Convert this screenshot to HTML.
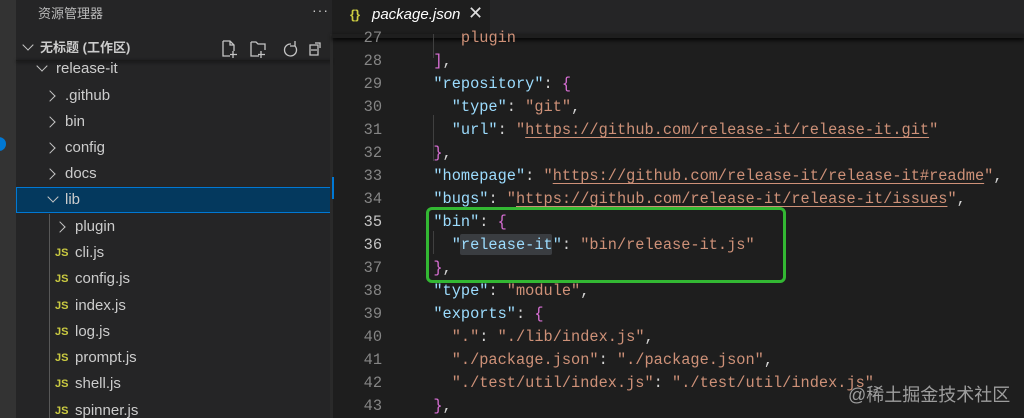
<!DOCTYPE html>
<html><head><meta charset="utf-8"><style>
*{margin:0;padding:0;box-sizing:border-box}
html,body{width:1024px;height:418px;overflow:hidden}
body{background:#1e1e1e;position:relative;font-family:"Liberation Sans","Noto Sans CJK SC",sans-serif}
#act{position:absolute;left:0;top:0;width:16px;height:418px;background:#333}
#side{position:absolute;left:16px;top:0;width:316px;height:418px;background:#252526;color:#ccc}
.row{position:absolute;left:0;width:316px;height:26px;line-height:26px;font-size:15px;color:#ccc}
.chev{position:absolute;width:8px;height:8px;border-right:1.5px solid #c5c5c5;border-bottom:1.5px solid #c5c5c5}
.js{position:absolute;font-size:11px;font-weight:bold;color:#cbcb41;line-height:26px}
#tabs{position:absolute;left:332px;top:0;width:692px;height:34px;background:#252526}
#tab{position:absolute;left:332px;top:0;width:158px;height:34px;background:#1e1e1e}
#ed{position:absolute;left:332px;top:34px;width:692px;height:384px;font-family:"Liberation Mono",monospace;font-size:15.3px}
.cd{position:absolute;left:83px;white-space:pre;color:#d4d4d4}
.k{color:#9cdcfe}.s{color:#ce9178}.p{color:#da70d6}.u{color:#ce9178;text-decoration:underline;text-underline-offset:3px}
</style></head><body>
<div id="act"><div style="position:absolute;left:-8px;top:137px;width:14px;height:14px;border-radius:7px;background:#0078d4"></div></div>
<div id="side">
<div style="position:absolute;left:22px;top:4px;font-size:13px;color:#bbb;line-height:20px">资源管理器</div>
<div style="position:absolute;left:296px;top:2px;font-size:14px;color:#ccc;letter-spacing:1px">···</div>
<div style="position:absolute;left:0;top:60px;width:316px;height:1px;background:#1a1a1a;box-shadow:0 1px 3px #000"></div>
<div class="chev" style="left:8px;top:41px;transform:rotate(45deg)"></div>
<div style="position:absolute;left:24px;top:38px;font-size:13px;font-weight:bold;color:#ccc;line-height:20px">无标题 (工作区)</div>
<svg style="position:absolute;left:205px;top:39px" width="100" height="20" fill="none" stroke="#c5c5c5" stroke-width="1.3">
<path d="M2 2h7l4 4v6M2 2v15h7M9 2v4h4M12 12v7M9 15.5h7"/>
<path d="M30 3h5l2 2h7v6M30 3v14h8M40 12v7M37 15.5h7"/>
<path d="M70 5a6 6 0 1 0 4 2M74 2v5h-5"/>
<path d="M94 4h5v5M91 6h6v10h-8V6zM90 11h6"/>
</svg>
<div class="row" style="top:56px"><div class="chev" style="left:22px;top:6px;transform:rotate(45deg)"></div><span style="position:absolute;left:40px">release-it</span></div>
<div class="row" style="top:83px"><div class="chev" style="left:30px;top:9px;transform:rotate(-45deg)"></div><span style="position:absolute;left:49px">.github</span></div>
<div class="row" style="top:109px"><div class="chev" style="left:30px;top:9px;transform:rotate(-45deg)"></div><span style="position:absolute;left:49px">bin</span></div>
<div class="row" style="top:135px"><div class="chev" style="left:30px;top:9px;transform:rotate(-45deg)"></div><span style="position:absolute;left:49px">config</span></div>
<div class="row" style="top:161px"><div class="chev" style="left:30px;top:9px;transform:rotate(-45deg)"></div><span style="position:absolute;left:49px">docs</span></div>
<div class="row" style="top:187px;background:#04395e;border:1px solid #0078d4"><div class="chev" style="left:32px;top:5px;transform:rotate(45deg)"></div><span style="position:absolute;left:48px;top:-1px">lib</span></div>
<div style="position:absolute;left:33px;top:214px;width:1px;height:204px;background:#585858"></div>
<div class="row" style="top:214px"><div class="chev" style="left:40px;top:9px;transform:rotate(-45deg)"></div><span style="position:absolute;left:59px">plugin</span></div>
<div class="row" style="top:240px"><span class="js" style="left:39px">JS</span><span style="position:absolute;left:59px">cli.js</span></div>
<div class="row" style="top:266px"><span class="js" style="left:39px">JS</span><span style="position:absolute;left:59px">config.js</span></div>
<div class="row" style="top:293px"><span class="js" style="left:39px">JS</span><span style="position:absolute;left:59px">index.js</span></div>
<div class="row" style="top:319px"><span class="js" style="left:39px">JS</span><span style="position:absolute;left:59px">log.js</span></div>
<div class="row" style="top:345px"><span class="js" style="left:39px">JS</span><span style="position:absolute;left:59px">prompt.js</span></div>
<div class="row" style="top:371px"><span class="js" style="left:39px">JS</span><span style="position:absolute;left:59px">shell.js</span></div>
<div class="row" style="top:398px"><span class="js" style="left:39px">JS</span><span style="position:absolute;left:59px">spinner.js</span></div>
</div>
<div id="tabs"></div>
<div id="tab">
<span style="position:absolute;left:18px;top:7px;color:#cbcb41;font-size:13px;font-weight:bold">{}</span>
<span style="position:absolute;left:40px;top:6px;color:#fff;font-style:italic;font-size:15px">package.json</span>
<span style="position:absolute;left:136px;top:3px;color:#ddd;font-size:18px">✕</span>
</div>
<div id="ed">
<div style="position:absolute;left:-2px;top:0;width:3px;height:384px;background:#2a2a2a"></div>
<div style="position:absolute;left:0;top:0;width:692px;height:4px;box-shadow:0 2px 4px #000;background:#1e1e1e"></div>
<div style="position:absolute;left:0;top:143px;width:2px;height:22px;background:#0078d4"></div>
<div style="position:absolute;left:101px;top:0;width:1px;height:24px;background:#404040"></div>
<div style="position:absolute;left:101px;top:81px;width:1px;height:46px;background:#404040"></div>
<div style="position:absolute;left:101px;top:197px;width:1px;height:23px;background:#404040"></div>
<div style="position:absolute;left:128px;top:200px;width:92px;height:21px;background:#3a3d41;border-radius:2px"></div>
</div>
<div id="code" style="position:absolute;left:332px;top:29px;font-family:'Liberation Mono',monospace;font-size:15.3px;line-height:23px">
<div style="top:-2px;left:0;position:absolute;width:50px;text-align:right;color:#858585">27<br>28<br>29<br>30<br>31<br>32<br>33<br>34<br><span style="color:#c6c6c6">35</span><br><span style="color:#c6c6c6">36</span><br>37<br>38<br>39<br>40<br>41<br>42<br>43</div>
<div class="cd" style="top:-2px">     <span class="s">plugin</span>
  <span class="p">]</span>,
  <span class="k">"repository"</span>: <span class="p">{</span>
    <span class="k">"type"</span>: <span class="s">"git"</span>,
    <span class="k">"url"</span>: <span class="s">"</span><span class="u">https://github.com/release-it/release-it.git</span><span class="s">"</span>
  <span class="p">}</span>,
  <span class="k">"homepage"</span>: <span class="s">"</span><span class="u">https://github.com/release-it/release-it#readme</span><span class="s">"</span>,
  <span class="k">"bugs"</span>: <span class="s">"</span><span class="u">https://github.com/release-it/release-it/issues</span><span class="s">"</span>,
  <span class="k">"bin"</span>: <span class="p">{</span>
    <span class="k">"release-it"</span>: <span class="s">"bin/release-it.js"</span>
  <span class="p">}</span>,
  <span class="k">"type"</span>: <span class="s">"module"</span>,
  <span class="k">"exports"</span>: <span class="p">{</span>
    <span class="s">"."</span>: <span class="s">"./lib/index.js"</span>,
    <span class="s">"./package.json"</span>: <span class="s">"./package.json"</span>,
    <span class="s">"./test/util/index.js"</span>: <span class="s">"./test/util/index.js"</span>
  <span class="p">}</span>,</div>
</div>
<div style="position:absolute;left:426px;top:207px;width:360px;height:76px;border:3px solid #33b833;border-radius:6px"></div>
<div style="position:absolute;left:848px;top:381px;font-size:18px;color:rgba(200,200,200,0.75);font-family:'Liberation Sans','Noto Sans CJK SC',sans-serif">@稀土掘金技术社区</div>
</body></html>
